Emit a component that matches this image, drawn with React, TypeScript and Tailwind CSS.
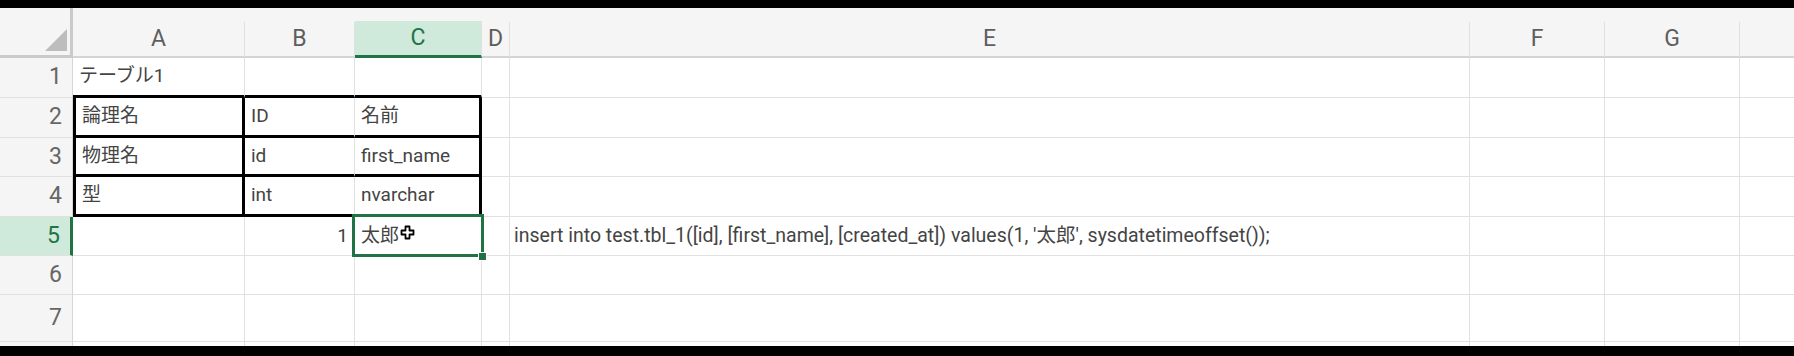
const COLS = ["A", "B", "C", "D", "E", "F", "G", "H"];

const ROW_HEIGHTS = ["h-[40px]", "h-[40px]", "h-[39px]", "h-[40px]", "h-[39px]", "h-[39px]", "h-[47px]", "h-[4px]"];

const TABLE: Record<string, string> = {
  "1A": "テーブル1",
  "2A": "論理名",
  "2B": "ID",
  "2C": "名前",
  "3A": "物理名",
  "3B": "id",
  "3C": "first_name",
  "4A": "型",
  "4B": "int",
  "4C": "nvarchar",
  "5E": "insert into test.tbl_1([id], [first_name], [created_at]) values(1, '太郎', sysdatetimeoffset());",
};

function FatCross() {
  return (
    <svg width="15" height="15" viewBox="0 0 15 15" className="-mt-[7px] ml-[1px]">
      <path
        d="M5.5 1.5h4v4h4v4h-4v4h-4v-4h-4v-4h4z"
        fill="white"
        stroke="black"
        strokeWidth={1.8}
        strokeLinejoin="round"
      />
    </svg>
  );
}

function cellBorders(row: number, col: string) {
  const inTable = row >= 2 && row <= 4 && (col === "A" || col === "B" || col === "C");
  const aboveTable = row === 1 && (col === "A" || col === "B" || col === "C");
  let cls = "";

  if (row === 8) {
    cls += " border-b-0";
  } else if (inTable || aboveTable) {
    cls += " border-b-[3px] border-b-black";
  } else {
    cls += " border-b border-b-[#e1e1e1]";
  }

  if (inTable && (col === "A" || col === "C")) {
    cls += " border-r-[3px] border-r-black";
  } else {
    cls += " border-r border-r-[#e1e1e1]";
  }

  if (inTable && col === "A") {
    cls += " border-l-[3px] border-l-black";
  }

  return cls;
}

export default function App() {
  return (
    <div className="w-[1794px] h-[356px] overflow-hidden bg-white font-['Roboto','Noto_Sans_CJK_JP',sans-serif]">
      <div className="h-[8px] bg-black" />

      <div className="grid w-[1900px] grid-cols-[73px_172px_110px_127px_28px_960px_135px_135px_160px]">
        {/* header row */}
        <div className="relative h-[50px] bg-[#f5f5f5] border-r-[3px] border-b-[3px] border-[#cacaca]">
          <svg width="22" height="22" viewBox="0 0 22 22" className="absolute right-[3px] bottom-[4px]">
            <path d="M22 0V22H0z" fill="#bdbdbd" />
          </svg>
        </div>
        {COLS.map((c) => (
          <div key={c} className="h-[50px] flex flex-col bg-[#f5f5f5]">
            <div className="h-[16px]" />
            {c === "C" ? (
              <div className="flex-1 flex items-center justify-center bg-[#cfe9da] border-r border-r-[#e1e1e1] border-b-[3px] border-b-[#217346] text-[23px] text-[#217346]">
                {c}
              </div>
            ) : (
              <div className="flex-1 flex items-center justify-center border-r border-r-[#e1e1e1] border-b-2 border-b-[#d4d4d4] text-[23px] text-[#5e5e5e]">
                {c === "H" ? "" : c}
              </div>
            )}
          </div>
        ))}

        {ROW_HEIGHTS.map((h, i) => {
          const row = i + 1;
          const selected = row === 5;
          return [
            <div
              key={`rh${row}`}
              className={`${h} flex items-center justify-end pr-[10px] text-[23px] ${
                selected
                  ? "bg-[#cfe9da] text-[#217346] border-r-[3px] border-r-[#217346] border-b border-b-[#e1e1e1]"
                  : "bg-[#f5f5f5] text-[#666666] border-r border-r-[#d6d6d6] border-b border-b-[#e1e1e1]"
              } ${row === 8 ? "border-b-0" : ""}`}
            >
              {row === 8 ? "" : row}
            </div>,
            ...COLS.map((c) => {
              const text = TABLE[`${row}${c}`];
              return (
                <div
                  key={`${row}${c}`}
                  className={`${h} relative flex items-center whitespace-nowrap text-[#444444] ${
                    c === "E" ? "text-[19.5px] px-[4px]" : "text-[19px]"
                  } ${
                    row === 5 && c === "B" ? "justify-end pr-[6px]" : c === "E" ? "" : "px-[6px]"
                  } ${cellBorders(row, c)}`}
                >
                  {row === 5 && c === "B" && "1"}
                  {row === 5 && c === "C" && (
                    <>
                      <span>太郎</span>
                      <FatCross />
                      <div className="absolute -top-[3px] -left-[3px] -right-[3px] -bottom-[2px] border-[3px] border-[#217346] z-10 pointer-events-none" />
                      <div className="absolute -right-[6px] -bottom-[6px] w-[9px] h-[9px] bg-[#217346] border border-white z-20" />
                    </>
                  )}
                  {text && <span>{text}</span>}
                </div>
              );
            }),
          ];
        })}
      </div>

      <div className="h-[10px] bg-black" />
    </div>
  );
}
